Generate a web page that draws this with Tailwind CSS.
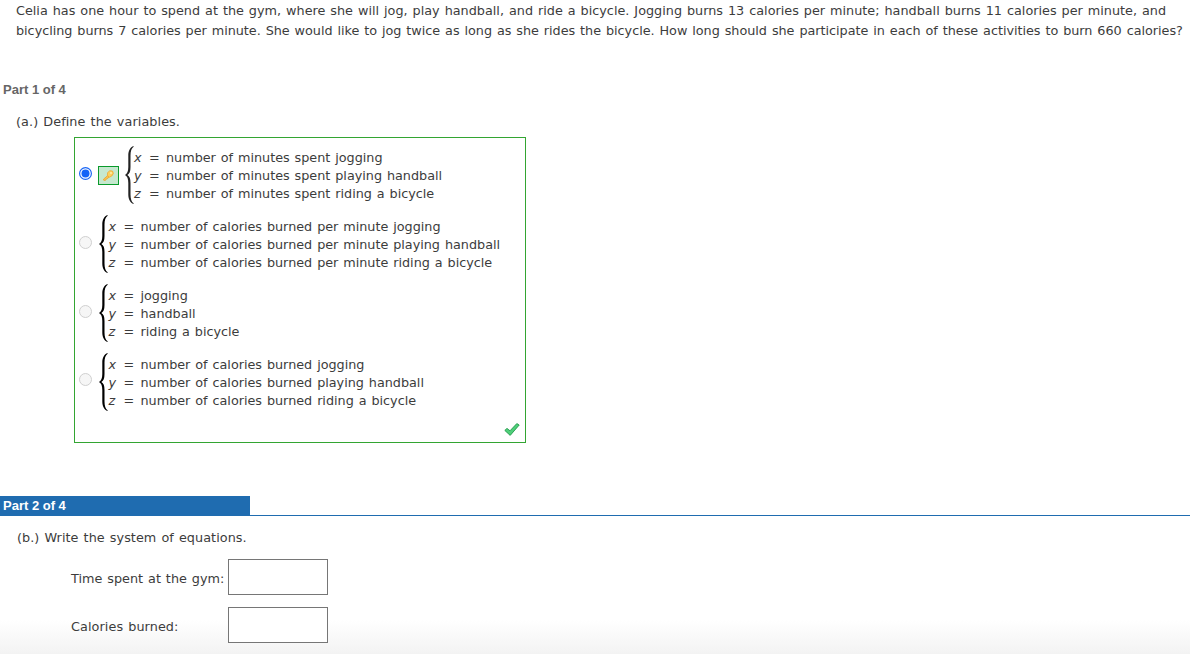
<!DOCTYPE html>
<html lang="en">
<head>
    <meta charset="UTF-8">
    <meta name="viewport" content="width=device-width, initial-scale=1.0">
    <title>Celia at the gym</title>
    <script src="https://cdn.jsdelivr.net/npm/@tailwindcss/browser@4"></script>
</head>
<body class="bg-white h-[654px] overflow-hidden text-[#3c3c3c] text-[12.8px] leading-[20px] [word-spacing:0.9px] font-['Verdana','DejaVu_Sans',sans-serif]">

    <!-- brace shared by all the options -->
    <svg class="hidden">
        <symbol id="brace" viewBox="0 0 9 58">
            <path d="M8.6 0C5.2 1.3 3.3 4.6 3.3 9.5V21C3.3 25.2 2.3 27.8 0 29C2.3 30.2 3.3 32.8 3.3 37V48.5C3.3 53.4 5.2 56.7 8.6 58V57.3C6.5 55.8 5.5 53 5.5 48.5V37C5.5 32.6 4.6 30.2 2.4 29C4.6 27.8 5.5 25.4 5.5 21V9.5C5.5 5 6.5 2.2 8.6 .7Z" fill="currentColor"/>
        </symbol>
    </svg>

    <div class="h-full flex flex-col bg-[linear-gradient(to_bottom,#fff_620px,#f3f3f3_654px)]">
        <p class="pl-4 pt-px whitespace-nowrap">
            Celia has one hour to spend at the gym, where she will jog, play handball, and ride a bicycle. Jogging burns 13 calories per minute; handball burns 11 calories per minute, and<br>
            <span class="tracking-[-0.028px]">bicycling burns 7 calories per minute. She would like to jog twice as long as she rides the bicycle. How long should she participate in each of these activities to burn 660 calories?</span>
        </p>

        <!-- Part 1 -->
        <h2 class="mt-[39px] pl-[3px] h-5 font-['Liberation_Sans',sans-serif] font-bold text-[13px] [word-spacing:0px] text-[#666]">Part 1 of 4</h2>
        <p class="mt-3 pl-4 h-5 tracking-[0.08px]">(a.) Define the variables.</p>

        <div class="mt-[5px] ml-[74px] w-[452px] h-[306px] shrink-0 border border-[#33a532] pl-1 pt-2 relative leading-[18px]">
            <div class="flex h-[58px] mb-[11px]">
                <svg class="w-[13px] h-[13px] mt-[21px]" viewBox="0 0 13 13"><circle cx="6.5" cy="6.5" r="5.9" fill="#fff" stroke="#1a66f5" stroke-width="1.2"/><circle cx="6.5" cy="6.5" r="4" fill="#1463f7"/></svg>
                <span class="ml-[6px] mt-5 w-[21px] h-[19px] border border-[#0a9a2c] bg-[#c6e8cf] flex items-center justify-center">
                    <svg class="w-[13px] h-[13px]" viewBox="0 0 13 13">
                        <path d="M6 6.3L1.5 10.2L1.8 11.3L3.2 11.4L4.2 10.6L4.6 9.8L5.7 9.4L7.6 7.6" fill="#fbc54a" stroke="#e79a25" stroke-width=".7"/>
                        <path d="M5.6 3.6L7.8 1.7L10.5 2L11.4 4.4L9.8 7L7.4 8.2L5.4 6.4Z" fill="#fdd05b" stroke="#eda12d" stroke-width=".7"/>
                        <circle cx="9" cy="4" r=".9" fill="#fff0b5"/>
                    </svg>
                </span>
                <svg class="w-[9px] h-[58px] ml-[6px] text-[#222]"><use href="#brace"/></svg>
                <div class="grid grid-cols-[15px_17px_auto] content-center pt-[2px] whitespace-nowrap tracking-[-0.02px]">
                    <i>x</i><span>=</span><span>number of minutes spent jogging</span>
                    <i>y</i><span>=</span><span>number of minutes spent playing handball</span>
                    <i>z</i><span>=</span><span>number of minutes spent riding a bicycle</span>
                </div>
            </div>

            <div class="flex h-[58px] mb-[11px]">
                <span class="w-[13px] h-[13px] mt-[21px] rounded-full border border-[#d0d0d0] bg-[#f6f6f6]"></span>
                <svg class="w-[9px] h-[58px] ml-[7px] text-black"><use href="#brace"/></svg>
                <div class="grid grid-cols-[15px_17px_auto] content-center pt-[2px] pl-[0.5px] whitespace-nowrap tracking-[-0.02px]">
                    <i>x</i><span>=</span><span>number of calories burned per minute jogging</span>
                    <i>y</i><span>=</span><span>number of calories burned per minute playing handball</span>
                    <i>z</i><span>=</span><span>number of calories burned per minute riding a bicycle</span>
                </div>
            </div>

            <div class="flex h-[58px] mb-[11px]">
                <span class="w-[13px] h-[13px] mt-[21px] rounded-full border border-[#d0d0d0] bg-[#f6f6f6]"></span>
                <svg class="w-[9px] h-[58px] ml-[7px] text-black"><use href="#brace"/></svg>
                <div class="grid grid-cols-[15px_17px_auto] content-center pt-[2px] pl-[0.5px] whitespace-nowrap tracking-[-0.02px]">
                    <i>x</i><span>=</span><span>jogging</span>
                    <i>y</i><span>=</span><span>handball</span>
                    <i>z</i><span>=</span><span>riding a bicycle</span>
                </div>
            </div>

            <div class="flex h-[58px]">
                <span class="w-[13px] h-[13px] mt-5 rounded-full border border-[#d0d0d0] bg-[#f6f6f6]"></span>
                <svg class="w-[9px] h-[58px] ml-[7px] text-black"><use href="#brace"/></svg>
                <div class="grid grid-cols-[15px_17px_auto] content-center pt-[2px] pl-[0.5px] whitespace-nowrap tracking-[-0.02px]">
                    <i>x</i><span>=</span><span>number of calories burned jogging</span>
                    <i>y</i><span>=</span><span>number of calories burned playing handball</span>
                    <i>z</i><span>=</span><span>number of calories burned riding a bicycle</span>
                </div>
            </div>

            <!-- correct mark -->
            <svg class="absolute right-[5px] bottom-[6px] w-4 h-[14px]" viewBox="0 0 16 14">
                <path d="M.8 8.4L3 6.4L6 8.8L12.8 1.6L15.2 3L6.2 13.4Z" fill="#4fcf7a" stroke="#219a4a" stroke-width=".9" stroke-linejoin="round"/>
            </svg>
        </div>

        <!-- Part 2 -->
        <div class="mt-[53px] h-5 shrink-0 border-b border-[#1f6cb0]">
            <h2 class="w-[250px] h-5 pl-[3px] bg-[#1f6cb0] text-white font-['Liberation_Sans',sans-serif] font-bold text-[13px] [word-spacing:0px]">Part 2 of 4</h2>
        </div>
        <p class="mt-3 pl-[17px] h-5 tracking-[0.06px]">(b.) Write the system of equations.</p>

        <div class="mt-[11px] ml-[71px] grid grid-cols-[157px_100px] gap-y-3 items-center">
            <span class="whitespace-nowrap pt-[3px]">Time spent at the gym:</span>
            <input type="text" class="w-[100px] h-9 border border-[#767676] bg-white">
            <span class="whitespace-nowrap pt-[3px] tracking-[0.08px]">Calories burned:</span>
            <input type="text" class="w-[100px] h-9 border border-[#767676] bg-white">
        </div>
    </div>

</body>
</html>
